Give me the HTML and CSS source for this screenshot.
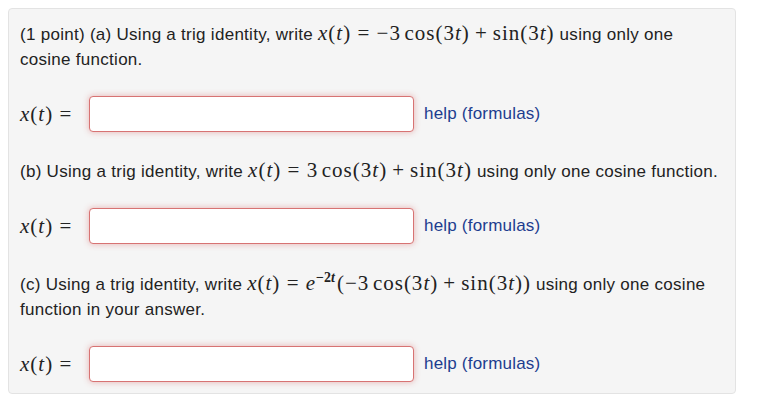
FILE: index.html
```html
<!DOCTYPE html>
<html>
<head>
<meta charset="utf-8">
<link rel="stylesheet" href="styles.css">
</head>
<body>
<div class="well">
  <p class="q">(1 point) (a) Using a trig identity, write <span class="m"><i>x</i>(<i>t</i>)<span class="rel">=</span>−3<span class="op">cos</span>(3<i>t</i>)<span class="bin">+</span>sin(3<i>t</i>)</span> using only one cosine function.</p>
  <div class="ans">
    <span class="m lbl"><i>x</i>(<i>t</i>)<span class="rel">=</span></span>
    <input class="box" type="text">
    <a class="help" href="#">help (formulas)</a>
  </div>
  <p class="q">(b) Using a trig identity, write <span class="m"><i>x</i>(<i>t</i>)<span class="rel">=</span>3<span class="op">cos</span>(3<i>t</i>)<span class="bin">+</span>sin(3<i>t</i>)</span> using only one cosine function.</p>
  <div class="ans">
    <span class="m lbl"><i>x</i>(<i>t</i>)<span class="rel">=</span></span>
    <input class="box" type="text">
    <a class="help" href="#">help (formulas)</a>
  </div>
  <p class="q q-last">(c) Using a trig identity, write <span class="m"><i>x</i>(<i>t</i>)<span class="rel">=</span><i>e</i><sup class="sup">−2<i>t</i></sup>(−3<span class="op">cos</span>(3<i>t</i>)<span class="bin">+</span>sin(3<i>t</i>))</span> using only one cosine function in your answer.</p>
  <div class="ans">
    <span class="m lbl"><i>x</i>(<i>t</i>)<span class="rel">=</span></span>
    <input class="box" type="text">
    <a class="help" href="#">help (formulas)</a>
  </div>
</div>
</body>
</html>
```
FILE: styles.css
```css
body {
  margin: 8px;
  background: #ffffff;
  font-family: "Liberation Sans", Arial, sans-serif;
  font-size: 17px;
  letter-spacing: 0.28px;
  color: #222222;
}
.well {
  width: 728px;
  box-sizing: border-box;
  background: #f5f5f5;
  border: 1px solid #e3e3e3;
  border-radius: 4px;
  padding: 11px 11px 11px 11px;
  display: flex;
  flex-direction: column;
  gap: 25.5px;
}
.q {
  margin: 0 0 -1.5px 0;
  padding-top: 1.5px;
  line-height: 25px;
}
.q-last {
  padding-top: 2.5px;
  margin-bottom: -1px;
}
.m {
  font-family: "Liberation Serif", "Times New Roman", serif;
  font-size: 21px;
  line-height: 16px;
  letter-spacing: 1px;
  white-space: nowrap;
}
.m i {
  font-style: italic;
}
.rel {
  margin: 0 0.3em;
}
.bin {
  margin: 0 0.24em;
}
.op {
  margin-left: 0.17em;
}
.sup {
  font-size: 14px;
  font-weight: bold;
  vertical-align: 8px;
  line-height: 0;
  letter-spacing: 0;
  margin-right: 2px;
}
.ans {
  display: flex;
  align-items: center;
  height: 36px;
}
.lbl {
  width: 69px;
  flex: none;
}
.lbl .rel {
  margin-right: 0;
}
.box {
  width: 325px;
  height: 36px;
  box-sizing: border-box;
  margin: 0;
  border: 1px solid #d77373;
  border-radius: 4px;
  background: #ffffff;
  box-shadow: 0 0 6px rgba(215, 90, 90, 0.45);
  outline: none;
  flex: none;
}
.help {
  margin-left: 10px;
  letter-spacing: 0.2px;
  color: #1d3d8f;
  text-decoration: none;
}
```
